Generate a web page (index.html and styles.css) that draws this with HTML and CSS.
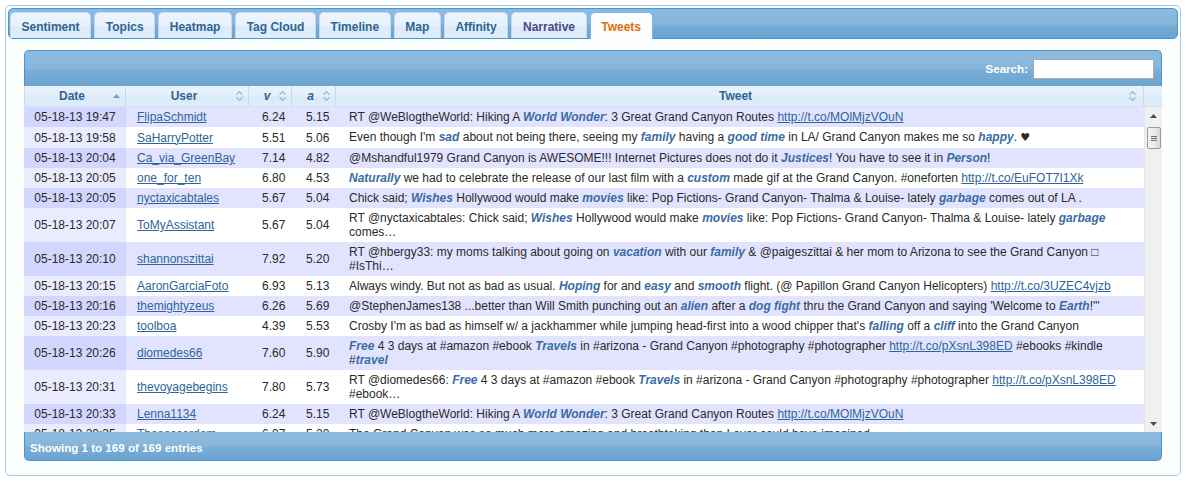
FILE: index.html
```html
<!DOCTYPE html>
<html>
<head>
<meta charset="utf-8">
<title>Tweets</title>
<link rel="stylesheet" href="styles.css">
</head>
<body>
<div class="tabs">
  <ul class="tabnav">
    <li class="tab"><a href="#">Sentiment</a></li>
    <li class="tab"><a href="#">Topics</a></li>
    <li class="tab"><a href="#">Heatmap</a></li>
    <li class="tab"><a href="#">Tag Cloud</a></li>
    <li class="tab"><a href="#">Timeline</a></li>
    <li class="tab"><a href="#">Map</a></li>
    <li class="tab"><a href="#">Affinity</a></li>
    <li class="tab visited"><a href="#">Narrative</a></li>
    <li class="tab active"><a href="#">Tweets</a></li>
  </ul>
  <div class="panel">
    <div class="dt-wrapper">
      <div class="toolbar toolbar-top">
        <label class="search">Search: <input type="text" class="search-input"></label>
      </div>
      <div class="thead">
        <div class="th c-date"><span class="lbl">Date</span><svg class="ico" width="7" height="4" viewBox="0 0 7 4"><path d="M0 4L3.5 0L7 4Z" fill="#6aa2d3"/></svg></div>
        <div class="th c-user"><span class="lbl">User</span><svg class="ico" width="7" height="10" viewBox="0 0 7 10"><path d="M0.6 3.6L3.5 0.7L6.4 3.6M0.6 6.4L3.5 9.3L6.4 6.4" fill="none" stroke="#7fb1dd" stroke-width="1.1"/></svg></div>
        <div class="th c-v"><span class="lbl"><i>v</i></span><svg class="ico" width="7" height="10" viewBox="0 0 7 10"><path d="M0.6 3.6L3.5 0.7L6.4 3.6M0.6 6.4L3.5 9.3L6.4 6.4" fill="none" stroke="#7fb1dd" stroke-width="1.1"/></svg></div>
        <div class="th c-a"><span class="lbl"><i>a</i></span><svg class="ico" width="7" height="10" viewBox="0 0 7 10"><path d="M0.6 3.6L3.5 0.7L6.4 3.6M0.6 6.4L3.5 9.3L6.4 6.4" fill="none" stroke="#7fb1dd" stroke-width="1.1"/></svg></div>
        <div class="th c-tweet"><span class="lbl">Tweet</span><svg class="ico" width="7" height="10" viewBox="0 0 7 10"><path d="M0.6 3.6L3.5 0.7L6.4 3.6M0.6 6.4L3.5 9.3L6.4 6.4" fill="none" stroke="#7fb1dd" stroke-width="1.1"/></svg></div>
        <div class="th th-fill"></div>
      </div>
      <div class="tbody-wrap">
        <div class="tbody-clip">
          <table class="grid">
            <colgroup>
              <col class="w-date"><col class="w-user"><col class="w-v"><col class="w-a"><col class="w-tweet">
            </colgroup>
            <tbody>
              <tr class="odd"><td class="sorted d">05-18-13 19:47</td><td class="u"><a href="#">FlipaSchmidt</a></td><td class="v">6.24</td><td class="a">5.15</td><td class="t">RT @WeBlogtheWorld: Hiking A <em>World Wonder</em>: 3 Great Grand Canyon Routes <a href="#">http://t.co/MOlMjzVOuN</a></td></tr>
              <tr class="even"><td class="sorted d">05-18-13 19:58</td><td class="u"><a href="#">SaHarryPotter</a></td><td class="v">5.51</td><td class="a">5.06</td><td class="t">Even though I'm <em>sad</em> about not being there, seeing my <em>family</em> having a <em>good time</em> in LA/ Grand Canyon makes me so <em>happy</em>. <span class="heart">♥</span></td></tr>
              <tr class="odd"><td class="sorted d">05-18-13 20:04</td><td class="u"><a href="#">Ca_via_GreenBay</a></td><td class="v">7.14</td><td class="a">4.82</td><td class="t">@Mshandful1979 Grand Canyon is AWESOME!!! Internet Pictures does not do it <em>Justices</em>! You have to see it in <em>Person</em>!</td></tr>
              <tr class="even"><td class="sorted d">05-18-13 20:05</td><td class="u"><a href="#">one_for_ten</a></td><td class="v">6.80</td><td class="a">4.53</td><td class="t"><em>Naturally</em> we had to celebrate the release of our last film with a <em>custom</em> made gif at the Grand Canyon. #oneforten <a href="#">http://t.co/EuFOT7I1Xk</a></td></tr>
              <tr class="odd"><td class="sorted d">05-18-13 20:05</td><td class="u"><a href="#">nyctaxicabtales</a></td><td class="v">5.67</td><td class="a">5.04</td><td class="t">Chick said; <em>Wishes</em> Hollywood would make <em>movies</em> like: Pop Fictions- Grand Canyon- Thalma &amp; Louise- lately <em>garbage</em> comes out of LA .</td></tr>
              <tr class="even"><td class="sorted d">05-18-13 20:07</td><td class="u"><a href="#">ToMyAssistant</a></td><td class="v">5.67</td><td class="a">5.04</td><td class="t">RT @nyctaxicabtales: Chick said; <em>Wishes</em> Hollywood would make <em>movies</em> like: Pop Fictions- Grand Canyon- Thalma &amp; Louise- lately <em>garbage</em> comes…</td></tr>
              <tr class="odd"><td class="sorted d">05-18-13 20:10</td><td class="u"><a href="#">shannonszittai</a></td><td class="v">7.92</td><td class="a">5.20</td><td class="t">RT @hbergy33: my moms talking about going on <em>vacation</em> with our <em>family</em> &amp; @paigeszittai &amp; her mom to Arizona to see the Grand Canyon □ #IsThi…</td></tr>
              <tr class="even"><td class="sorted d">05-18-13 20:15</td><td class="u"><a href="#">AaronGarciaFoto</a></td><td class="v">6.93</td><td class="a">5.13</td><td class="t">Always windy. But not as bad as usual. <em>Hoping</em> for and <em>easy</em> and <em>smooth</em> flight. (@ Papillon Grand Canyon Helicopters) <a href="#">http://t.co/3UZEC4vjzb</a></td></tr>
              <tr class="odd"><td class="sorted d">05-18-13 20:16</td><td class="u"><a href="#">themightyzeus</a></td><td class="v">6.26</td><td class="a">5.69</td><td class="t">@StephenJames138 ...better than Will Smith punching out an <em>alien</em> after a <em>dog fight</em> thru the Grand Canyon and saying 'Welcome to <em>Earth</em>!'"</td></tr>
              <tr class="even"><td class="sorted d">05-18-13 20:23</td><td class="u"><a href="#">toolboa</a></td><td class="v">4.39</td><td class="a">5.53</td><td class="t">Crosby I'm as bad as himself w/ a jackhammer while jumping head-first into a wood chipper that's <em>falling</em> off a <em>cliff</em> into the Grand Canyon</td></tr>
              <tr class="odd"><td class="sorted d">05-18-13 20:26</td><td class="u"><a href="#">diomedes66</a></td><td class="v">7.60</td><td class="a">5.90</td><td class="t"><em>Free</em> 4 3 days at #amazon #ebook <em>Travels</em> in #arizona - Grand Canyon #photography #photographer <a href="#">http://t.co/pXsnL398ED</a> #ebooks #kindle #<em>travel</em></td></tr>
              <tr class="even"><td class="sorted d">05-18-13 20:31</td><td class="u"><a href="#">thevoyagebegins</a></td><td class="v">7.80</td><td class="a">5.73</td><td class="t">RT @diomedes66: <em>Free</em> 4 3 days at #amazon #ebook <em>Travels</em> in #arizona - Grand Canyon #photography #photographer <a href="#">http://t.co/pXsnL398ED</a> #ebook…</td></tr>
              <tr class="odd"><td class="sorted d">05-18-13 20:33</td><td class="u"><a href="#">Lenna1134</a></td><td class="v">6.24</td><td class="a">5.15</td><td class="t">RT @WeBlogtheWorld: Hiking A <em>World Wonder</em>: 3 Great Grand Canyon Routes <a href="#">http://t.co/MOlMjzVOuN</a></td></tr>
              <tr class="even"><td class="sorted d">05-18-13 20:35</td><td class="u"><a href="#">Thesoccerdom</a></td><td class="v">6.07</td><td class="a">5.20</td><td class="t">The Grand Canyon was so much more amazing and breathtaking than I ever could have imagined</td></tr>
            </tbody>
          </table>
        </div>
        <div class="vscroll">
          <div class="sb-btn"><svg width="7" height="4" viewBox="0 0 7 4"><path d="M0 4L3.5 0L7 4Z" fill="#4a4a4a"/></svg></div>
          <div class="sb-track">
            <div class="sb-thumb"><span class="grip"></span><span class="grip"></span><span class="grip"></span></div>
          </div>
          <div class="sb-btn"><svg width="7" height="4" viewBox="0 0 7 4"><path d="M0 0L3.5 4L7 0Z" fill="#4a4a4a"/></svg></div>
        </div>
      </div>
      <div class="toolbar toolbar-bottom">Showing 1 to 169 of 169 entries</div>
    </div>
  </div>
</div>
</body>
</html>
```

FILE: styles.css
```css
html, body {
  margin: 0;
  padding: 0;
  background: #ffffff;
  font-family: "Liberation Sans", Arial, sans-serif;
}

.tabs {
  margin: 5px;
  width: 1176px;
  height: 471px;
  box-sizing: border-box;
  border: 1px solid #a6c9e2;
  border-radius: 5px;
  padding: 2px;
  background: #fcfdfd;
  display: flex;
  flex-direction: column;
}

.tabnav {
  list-style: none;
  margin: 0;
  height: 31px;
  box-sizing: border-box;
  border: 1px solid #4297d7;
  border-radius: 5px;
  padding: 3px 2px 0 1px;
  display: flex;
  align-items: flex-end;
  gap: 3px;
  background: linear-gradient(180deg, #8ebbdd 0%, #86b5da 50%, #76abd4 60%, #6ca4d0 100%);
}

.tab {
  height: 26px;
  box-sizing: border-box;
  border: 1px solid #c5dbec;
  border-bottom: 0;
  border-radius: 5px 5px 0 0;
  background: linear-gradient(180deg, #eef6fe 0%, #e6f1fc 50%, #dcebf9 55%, #dfeefb 100%);
}

.tab a {
  display: block;
  padding: 2px 10.6px 0 10.6px;
  font-size: 12px;
  font-weight: bold;
  line-height: 24px;
  color: #2f6493;
  text-decoration: none;
}

.tab.visited a {
  color: #4b4a88;
}

.tab.active {
  height: 27px;
  margin-bottom: -1px;
  border-color: #79b7e7;
  background: #fbfcfd;
}

.tab.active a {
  color: #e17009;
}

.panel {
  flex: 1;
  padding: 11px 16px 0 16px;
}

.dt-wrapper {
  width: 1138px;
  height: 411px;
  display: flex;
  flex-direction: column;
  font-size: 12px;
  color: #2a2a2a;
}

.toolbar {
  box-sizing: border-box;
  border: 1px solid #4297d7;
  background: linear-gradient(180deg, #8ebbdd 0%, #88b6da 48%, #78acd5 58%, #6ca4d0 100%);
  color: #ffffff;
  font-weight: bold;
  font-size: 11.6px;
  display: flex;
  align-items: center;
}

.toolbar-top {
  height: 36px;
  border-bottom: 0;
  border-radius: 5px 5px 0 0;
  justify-content: flex-end;
  padding: 0 7px 0 0;
}

.search {
  display: flex;
  align-items: center;
  gap: 5px;
}

.search-input {
  width: 121px;
  height: 20px;
  box-sizing: border-box;
  margin: 0;
  border: 1px solid #a9a9a9;
  background: #ffffff;
  padding: 0 2px;
}

.toolbar-bottom {
  height: 29px;
  border-top: 0;
  border-radius: 0 0 5px 5px;
  padding: 2px 0 0 5px;
}

.thead {
  height: 21px;
  display: flex;
  background: linear-gradient(180deg, #eaf3fc 0%, #e5f0fb 45%, #dbe9f8 55%, #dfecf9 100%);
  border-bottom: 1px solid #cfe2f3;
  box-sizing: border-box;
}

.th {
  box-sizing: border-box;
  border-right: 1px solid #c5dbec;
  display: flex;
  align-items: center;
  padding: 0 5px 0 6px;
  font-weight: bold;
  font-size: 12px;
  color: #2f6493;
}

.th .lbl {
  flex: 1;
  text-align: center;
}

.th .ico {
  flex: none;
}

.c-date { width: 102px; border-left: 1px solid #c5dbec; }
.c-user { width: 123px; }
.c-v { width: 43px; }
.c-a { width: 44px; }
.c-tweet { width: 808px; padding-right: 7px; }
.th-fill { flex: 1; border-right: 0; }

.tbody-wrap {
  height: 325px;
  display: flex;
  overflow: hidden;
}

.tbody-clip {
  width: 1120px;
  height: 325px;
  overflow: hidden;
  background: #ffffff;
}

.grid {
  width: 1120px;
  table-layout: fixed;
  border-collapse: collapse;
  border-spacing: 0;
}

.w-date { width: 102px; }
.w-user { width: 123px; }
.w-v { width: 43px; }
.w-a { width: 44px; }
.w-tweet { width: 808px; }

.grid td {
  padding: 3px 6px 3px 11px;
  line-height: 14px;
  font-size: 12px;
  vertical-align: middle;
  color: #2a2a2a;
}

.grid td.d { text-align: center; padding: 3px 4px; }
.grid td.v { padding-left: 13px; }
.grid td.a { padding-left: 14px; }
.grid td.t { padding: 3px 8px 3px 13px; }

tr.odd td { background: #e2e4ff; }
tr.odd td.sorted { background: #d3d6ff; }
tr.even td { background: #ffffff; }
tr.even td.sorted { background: #eaebff; }

.grid a {
  color: #2e6497;
  text-decoration: underline;
}

.grid em {
  font-style: italic;
  font-weight: bold;
  color: #3a6ca3;
}

.heart {
  font-family: "DejaVu Sans", sans-serif;
  font-size: 11px;
}

.vscroll {
  width: 18px;
  height: 325px;
  background: #f0f0f0;
  border-left: 1px solid #e6e6e6;
  box-sizing: border-box;
  display: flex;
  flex-direction: column;
}

.sb-btn {
  height: 17px;
  display: flex;
  align-items: center;
  justify-content: center;
}

.sb-track {
  flex: 1;
  padding-top: 3px;
  display: flex;
  flex-direction: column;
  align-items: center;
}

.sb-thumb {
  width: 14px;
  height: 22px;
  box-sizing: border-box;
  border: 1px solid #9c9c9c;
  border-radius: 2px;
  background: linear-gradient(90deg, #f6f6f6 0%, #e8e8e8 60%, #dadada 100%);
  display: flex;
  flex-direction: column;
  align-items: center;
  justify-content: center;
  gap: 1px;
}

.grip {
  width: 6px;
  height: 1px;
  background: #6e6e6e;
}
```
